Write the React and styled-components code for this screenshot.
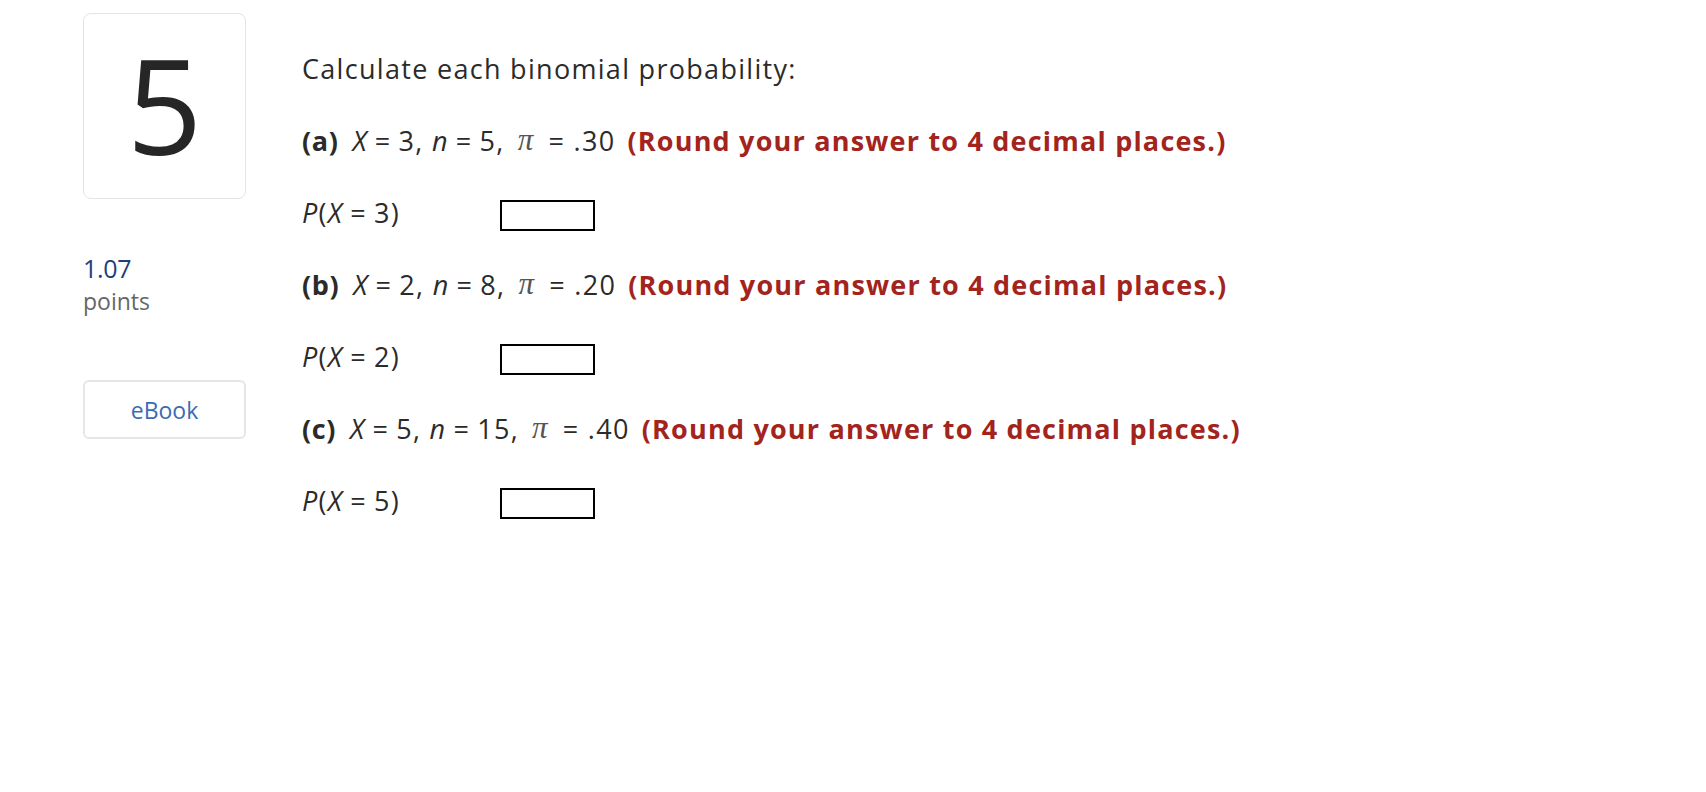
import React from 'react'
import styled, { createGlobalStyle } from 'styled-components'

const GlobalStyle = createGlobalStyle`
  html, body {
    margin: 0;
    padding: 0;
    background: #fff;
  }
  body {
    font-family: "Open Sans", Lato, "Liberation Sans", sans-serif;
    color: #2b2b2b;
  }
`

const Page = styled.div`
  display: flex;
  align-items: flex-start;
  gap: 56px;
  padding: 13px 0 0 83px;
  min-height: 779px;
`

const Side = styled.aside`
  width: 163px;
  display: flex;
  flex-direction: column;
`

const NumberCard = styled.div`
  box-sizing: border-box;
  height: 186px;
  border: 1px solid #e4e4e4;
  border-radius: 8px;
  display: flex;
  align-items: center;
  justify-content: center;
  font-size: 132px;
  font-weight: 400;
  color: #262626;
  line-height: 1;
  padding-bottom: 4px;
`

const Points = styled.div`
  margin-top: 52px;
  font-size: 25px;
  line-height: 34px;
  color: #1d3f7d;
  letter-spacing: -0.3px;
`

const PointsLabel = styled.div`
  font-size: 23px;
  line-height: 33px;
  color: #666;
`

const EbookButton = styled.button`
  box-sizing: border-box;
  margin-top: 62px;
  height: 59px;
  border: 2px solid #e6e6e6;
  border-radius: 6px;
  background: #fff;
  font-family: inherit;
  font-size: 23px;
  color: #3a6cb4;
  cursor: pointer;
`

const Content = styled.main`
  padding-top: 19px;
  font-size: 27px;
  letter-spacing: 1.3px;
`

const Line = styled.div`
  display: flex;
  align-items: center;
  height: 72px;
  white-space: pre;
`

const Label = styled.span`
  font-weight: 700;
  letter-spacing: 0.6px;
  margin-right: 14px;
`

const Var = styled.i`
  font-style: italic;
`

const Eq = styled.span`
  margin: 0 7px;
`

const Pi = styled.i`
  font-family: "Liberation Serif", "DejaVu Serif", serif;
  font-size: 31px;
  color: #555;
  margin: 0 14px 0 13px;
`

const Note = styled.span`
  font-weight: 700;
  color: #a3231d;
  letter-spacing: 1.2px;
  margin-left: 12px;
`

const AnswerLabel = styled.span`
  width: 198px;
`

const AnswerBox = styled.input`
  box-sizing: border-box;
  width: 95px;
  height: 31px;
  margin-top: 6px;
  border: 2px solid #000;
  border-radius: 0;
  padding: 0 4px;
  font-family: inherit;
  font-size: 18px;
  outline: none;
`

const parts = [
  { tag: '(a)', x: 3, n: 5, p: '.30' },
  { tag: '(b)', x: 2, n: 8, p: '.20' },
  { tag: '(c)', x: 5, n: 15, p: '.40' },
]

const Part = ({ tag, x, n, p }) => (
  <>
    <Line>
      <Label>{tag}</Label>
      <Var>X</Var>
      <Eq>=</Eq>
      {x},{' '}
      <Var>n</Var>
      <Eq>=</Eq>
      {n},
      <Pi>π</Pi>
      ={' '}{p}
      <Note>(Round your answer to 4 decimal places.)</Note>
    </Line>
    <Line>
      <AnswerLabel>
        <Var>P</Var>(<Var>X</Var>
        <Eq>=</Eq>
        {x})
      </AnswerLabel>
      <AnswerBox type="text" aria-label={`P(X = ${x})`} />
    </Line>
  </>
)

const App = () => (
  <>
    <GlobalStyle />
    <Page>
      <Side>
        <NumberCard>5</NumberCard>
        <Points>1.07</Points>
        <PointsLabel>points</PointsLabel>
        <EbookButton type="button">eBook</EbookButton>
      </Side>
      <Content>
        <Line>Calculate each binomial probability:</Line>
        {parts.map(part => (
          <Part key={part.tag} {...part} />
        ))}
      </Content>
    </Page>
  </>
)

export default App
